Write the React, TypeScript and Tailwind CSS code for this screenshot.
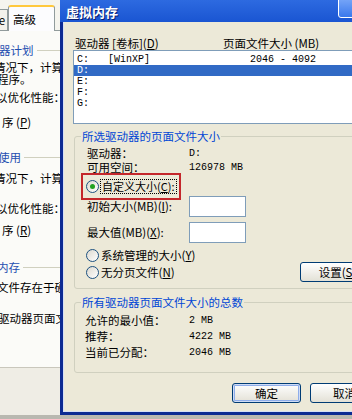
import React from 'react';

function Radio({ checked }: { checked?: boolean }) {
  return (
    <span className="w-[13px] h-[13px] shrink-0 rounded-full border border-[#1c5180] bg-linear-to-br from-[#dcd9cf] to-white flex items-center justify-center">
      {checked && <span className="w-[5px] h-[5px] rounded-full bg-[#21a121]" />}
    </span>
  );
}

function XpButton({ children, primary }: { children: React.ReactNode; primary?: boolean }) {
  return (
    <div
      className={
        primary
          ? 'w-[69px] h-[20px] shrink-0 rounded-[3px] border border-[#003c74] bg-linear-to-b from-white to-[#e3e1d6] flex items-center justify-center shadow-[inset_0_0_0_1px_#cfdcf5,inset_0_0_0_2px_#8eadea]'
          : 'w-[69px] h-[20px] shrink-0 rounded-[3px] border border-[#003c74] bg-linear-to-b from-white to-[#e3e1d6] flex items-center justify-center'
      }
    >
      {children}
    </div>
  );
}

function LeftPanel() {
  return (
    <div className="w-[60px] h-[415px] shrink-0 overflow-hidden flex flex-col bg-[#efede5]">
      {/* tabs */}
      <div className="h-[31px] shrink-0 flex items-end bg-[#f5f4ee] border-b border-[#919b9c]">
        <div className="w-[8px] h-[21px] shrink-0 flex justify-end items-center overflow-hidden border-r border-t border-[#919b9c] bg-[#f3f2ec] pr-[2px]">
          e
        </div>
        <div className="w-[47px] h-[26px] shrink-0 mb-[-1px] bg-[#fcfcfe] border-x border-[#919b9c] border-t-2 border-t-[#ffc83c] rounded-t-[3px] pl-[4px] pt-[6px]">
          高级
        </div>
      </div>

      {/* tab page, cut off by the dialog */}
      <div className="h-[337px] shrink-0 bg-[#fbfbf8] border-b border-[#c9c7bc] flex flex-col whitespace-nowrap leading-[12px]">
        <div className="mt-[13px] h-[12px] flex items-center">
          <span className="ml-[-1px] text-[#1f4fb0]">器计划</span>
          <span className="flex-1 h-px bg-[#d0d0bf] ml-[3px]" />
        </div>
        <div className="mt-[5px] h-[12px] ml-[-6px]">情况下，计算机</div>
        <div className="h-[12px] ml-[-3px]">程序。</div>
        <div className="mt-[6px] h-[12px] ml-[-4px]">以优化性能：</div>
        <div className="mt-[13px] h-[12px] ml-[2px]">
          序 (<span className="underline">P</span>)
        </div>

        <div className="mt-[23px] h-[12px] flex items-center">
          <span className="ml-[-2px] text-[#1f4fb0]">使用</span>
          <span className="flex-1 h-px bg-[#d0d0bf] ml-[3px]" />
        </div>
        <div className="mt-[9px] h-[12px] ml-[-6px]">情况下，计算机</div>
        <div className="mt-[18px] h-[12px] ml-[-4px]">以优化性能：</div>
        <div className="mt-[10px] h-[12px] ml-[2px]">
          序 (<span className="underline">R</span>)
        </div>

        <div className="mt-[25px] h-[12px] flex items-center">
          <span className="ml-[-3px] text-[#1f4fb0]">内存</span>
          <span className="flex-1 h-px bg-[#d0d0bf] ml-[3px]" />
        </div>
        <div className="mt-[8px] h-[12px] ml-[-3px]">文件存在于硬盘</div>
        <div className="mt-[19px] h-[12px] ml-[-2px]">驱动器页面文件</div>
      </div>
    </div>
  );
}

function Dialog() {
  const mono = "font-['Liberation_Mono',monospace] text-[10px]";
  return (
    <div className="w-[300px] h-[415px] shrink-0 overflow-hidden flex flex-col">
      {/* title bar */}
      <div className="h-[22px] shrink-0 flex items-start bg-linear-to-b from-[#2d6ae0] to-[#1a55d2]">
        <span className="pl-[6px] pt-[4px] text-[13px] leading-[15px] font-bold text-white [text-shadow:1px_1px_0_#0a1e6e]">
          虚拟内存
        </span>
        <div className="ml-auto mr-[1px] mt-[-3px] w-[21px] h-[21px] rounded-[3px] border border-white bg-linear-to-b from-[#7aa8f8] to-[#3a78ec]" />
      </div>

      {/* frame */}
      <div className="flex-1 flex flex-col bg-[#0c2a92] pl-[3px] pb-[3px]">
        <div className="flex-1 flex flex-col bg-[#ece9d8] border-l border-b border-[#d6dff5] pl-[9px] whitespace-nowrap">
          {/* list header */}
          <div className="mt-[14px] h-[14px] flex items-center">
            <span className="w-[150px] pl-[2px]">
              驱动器 [卷标](<span className="underline">D</span>)
            </span>
            <span>页面文件大小 (MB)</span>
          </div>

          {/* drive list */}
          <div className="h-[74px] w-[320px] shrink-0 bg-white border border-[#7f9db9] pt-[3px] flex flex-col">
            <div className={`h-[11px] leading-[11px] flex ${mono}`}>
              <span className="w-[34px] pl-[3px]">C:</span>
              <span className="w-[142px]">[WinXP]</span>
              <span>2046 - 4092</span>
            </div>
            <div className={`h-[11px] leading-[11px] flex bg-[#316ac5] text-white ${mono}`}>
              <span className="pl-[3px]">D:</span>
            </div>
            <div className={`h-[11px] leading-[11px] pl-[3px] ${mono}`}>E:</div>
            <div className={`h-[11px] leading-[11px] pl-[3px] ${mono}`}>F:</div>
            <div className={`h-[11px] leading-[11px] pl-[3px] ${mono}`}>G:</div>
          </div>

          {/* selected drive group */}
          <fieldset className="mt-[6px] ml-[1px] w-[320px] border border-[#d0d0bf] rounded-[3px] pb-[6px] flex flex-col">
            <legend className="ml-[6px] px-[1px] text-[#0046d5] leading-[13px]">所选驱动器的页面文件大小</legend>
            <div className="mt-[3px] h-[14px] flex items-center pl-[12px]">
              <span className="w-[102px]">驱动器：</span>
              <span className={mono}>D:</span>
            </div>
            <div className="h-[14px] flex items-center pl-[12px]">
              <span className="w-[102px]">可用空间：</span>
              <span className={mono}>126978 MB</span>
            </div>
            <div className="self-start mt-[-1px] ml-[6px] h-[27px] border-2 border-[#c4262b] flex items-center pl-[3px] pr-[2px] gap-[1px]">
              <Radio checked />
              <span className="shrink-0 border border-dotted border-black px-[1px] leading-[13px] text-[11px]">
                自定义大小(<span className="underline">C</span>):
              </span>
            </div>
            <div className="mt-[-4px] h-[21px] flex items-center pl-[12px]">
              <span className="w-[102px]">
                初始大小(MB)(<span className="underline">I</span>):
              </span>
              <div className="w-[57px] h-[21px] bg-white border border-[#7f9db9]" />
            </div>
            <div className="mt-[5px] h-[21px] flex items-center pl-[12px]">
              <span className="w-[102px]">
                最大值(MB)(<span className="underline">X</span>):
              </span>
              <div className="w-[57px] h-[21px] bg-white border border-[#7f9db9]" />
            </div>
            <div className="mt-[6px] h-[13px] flex items-center pl-[11px] gap-[2px]">
              <Radio />
              <span>
                系统管理的大小(<span className="underline">Y</span>)
              </span>
            </div>
            <div className="h-[20px] flex items-center">
              <div className="w-[225px] flex items-center pl-[11px] gap-[2px]">
                <Radio />
                <span>
                  无分页文件(<span className="underline">N</span>)
                </span>
              </div>
              <div className="w-[75px] h-[20px] rounded-[3px] border border-[#003c74] bg-linear-to-b from-white to-[#e3e1d6] flex items-center justify-center">
                <span>
                  设置(<span className="underline">S</span>)
                </span>
              </div>
            </div>
          </fieldset>

          {/* totals group */}
          <fieldset className="mt-[7px] ml-[1px] w-[320px] border border-[#d0d0bf] rounded-[3px] pb-[12px] flex flex-col">
            <legend className="ml-[6px] px-[1px] text-[#0046d5] leading-[13px]">所有驱动器页面文件大小的总数</legend>
            <div className="mt-[3px] h-[16px] flex items-center pl-[10px]">
              <span className="w-[104px]">允许的最小值：</span>
              <span className={mono}>2 MB</span>
            </div>
            <div className="h-[16px] flex items-center pl-[10px]">
              <span className="w-[104px]">推荐：</span>
              <span className={mono}>4222 MB</span>
            </div>
            <div className="h-[16px] flex items-center pl-[10px]">
              <span className="w-[104px]">当前已分配：</span>
              <span className={mono}>2046 MB</span>
            </div>
          </fieldset>

          {/* dialog buttons */}
          <div className="mt-[10px] ml-[159px] flex gap-[9px]">
            <XpButton primary>确定</XpButton>
            <XpButton>取消</XpButton>
          </div>
        </div>
      </div>
    </div>
  );
}

export default function App() {
  return (
    <div className="w-[352px] h-[419px] overflow-hidden flex items-start bg-[#b9b8b0] text-black font-['Noto_Sans_CJK_SC',sans-serif] text-[11.5px] leading-[13px]">
      <LeftPanel />
      <Dialog />
    </div>
  );
}
